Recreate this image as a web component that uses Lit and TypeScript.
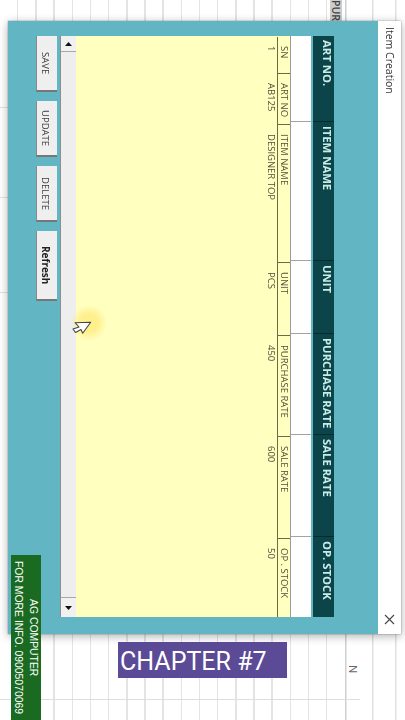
import { LitElement, html, css, svg } from "lit";
import { customElement } from "lit/decorators.js";

const FIELDS = ["ART NO.", "ITEM NAME", "UNIT", "PURCHASE RATE", "SALE RATE", "OP. STOCK"];
const LIST_HEAD = ["SN", "ART NO", "ITEM NAME", "UNIT", "PURCHASE RATE", "SALE RATE", "OP . STOCK"];
const LIST_ROW = ["1", "AB125", "DESIGNER TOP", "PCS", "450", "600", "50"];
const BUTTONS = ["SAVE", "UPDATE", "DELETE", "Refresh"];

@customElement("app-root")
export class AppRoot extends LitElement {
  static styles = css`
    :host {
      display: block;
      position: relative;
      width: 405px;
      height: 720px;
      overflow: hidden;
      font-family: "Open Sans", sans-serif;
      background-color: #fff;
      background-image:
        linear-gradient(#dedede, #dedede),
        linear-gradient(#e2e2e2, #e2e2e2),
        linear-gradient(#e2e2e2, #e2e2e2),
        linear-gradient(#e2e2e2, #e2e2e2),
        linear-gradient(#cfcfcf, #cfcfcf),
        linear-gradient(#e0e0e0, #e0e0e0),
        linear-gradient(#e0e0e0, #e0e0e0),
        repeating-linear-gradient(90deg, #e4e4e4 0 1.5px, transparent 1.5px 18.17px);
      background-repeat: no-repeat;
      background-size:
        360px 1px,
        10px 1px,
        10px 1px,
        10px 1px,
        1.5px 100%,
        1.5px 100%,
        1.5px 100%,
        312px 100%;
      background-position:
        0 699px,
        0 107px,
        0 197px,
        0 292px,
        345px 0,
        372px 0,
        395px 0,
        17px 0;
    }
    .col-head {
      position: absolute;
      left: 330px;
      top: 0;
      width: 12px;
      height: 21px;
      background: #cdcdcd;
      color: #444;
      writing-mode: vertical-rl;
      font-size: 10.5px;
      line-height: 12px;
      font-weight: 600;
      white-space: nowrap;
      box-sizing: border-box;
    }
    .col-letter {
      position: absolute;
      left: 347px;
      top: 665px;
      writing-mode: vertical-rl;
      font-size: 11px;
      line-height: 12px;
      color: #666;
    }
    .window {
      position: absolute;
      left: 8px;
      top: 21px;
      width: 393px;
      height: 613px;
      box-sizing: border-box;
      writing-mode: vertical-rl;
      display: flex;
      flex-direction: column;
      background: #fff;
      box-shadow: 0 2px 9px rgba(0, 0, 0, 0.32), 0 0 1px #667;
      filter: blur(0.35px);
    }
    .title {
      block-size: 23px;
      flex: none;
      display: flex;
      align-items: center;
      justify-content: space-between;
      padding-inline: 6px 9px;
      box-sizing: border-box;
      font-size: 10.5px;
      color: #333;
      background: #fff;
    }
    .close { width: 11px; height: 11px; display: block; }
    .client {
      flex: 1;
      background: #62b5c3;
      padding-block-start: 44px;
      padding-inline-start: 15px;
      padding-inline-end: 17px;
      display: flex;
      flex-direction: column;
      align-items: stretch;
    }
    .fields {
      display: grid;
      grid-template-columns: 86px 139px 73px 101px 102px 80px;
      block-size: 21px;
      background: #0b4449;
      flex: none;
    }
    .fields div {
      color: #c9ece9;
      font-weight: 700;
      font-size: 11.3px;
      line-height: 14px;
      padding-inline-start: 4px;
      white-space: nowrap;
      border-inline-end: 1px solid #062a2e;
    }
    .fields div:last-child { border-inline-end: none; }
    .inputs {
      display: grid;
      grid-template-columns: 86px 139px 73px 101px 102px 80px;
      block-size: 20px;
      margin-block-start: 2px;
      flex: none;
      background: #fff;
    }
    .inputs div { border-inline-end: 1.5px solid #a3a3a3; }
    .inputs div:last-child { border-inline-end: none; }
    .list {
      block-size: 231px;
      flex: none;
      display: flex;
      flex-direction: column;
      background: #ffffc0;
      border-block-start: 1px solid #9a9a9a;
      box-sizing: border-box;
    }
    .table { flex: 1; padding-inline-start: 1px; color: #4f4f3a; }
    .row {
      display: grid;
      grid-template-columns: 37px 51px 138px 73px 101px 102px 76px;
      font-size: 9.5px;
      white-space: nowrap;
    }
    .row > div { padding-inline-start: 9px; }
    .row.head {
      block-size: 13px;
      line-height: 12px;
      border-block-end: 1px solid #6b6b45;
      box-sizing: border-box;
    }
    .row.head > div { border-inline-end: 1px solid #6b6b45; }
    .row.head > div:last-child { border-inline-end: none; }
    .row.data { block-size: 12px; line-height: 12px; }
    .scrollbar {
      block-size: 16px;
      flex: none;
      background: #eeeeee;
      border-block-end: 1.5px solid #8e8e8e;
      box-sizing: border-box;
      display: flex;
      justify-content: space-between;
    }
    .sbtn {
      inline-size: 15px;
      display: flex;
      align-items: center;
      justify-content: center;
      background: #f1f1f1;
      border-inline-end: 1px solid #a8a8a8;
    }
    .sbtn.down { inline-size: 19px; border-inline-end: none; border-inline-start: 1px solid #a8a8a8; }
    .sbtn svg { width: 7px; height: 4px; display: block; }
    .actions {
      display: flex;
      gap: 9px;
      block-size: 21px;
      margin-block-start: 3px;
      flex: none;
    }
    .btn {
      inline-size: 56px;
      background: #efefef;
      border-inline-end: 2px solid #777;
      border-block-end: 1.5px solid #8a8a8a;
      box-sizing: border-box;
      display: flex;
      align-items: center;
      justify-content: center;
      font-size: 9.5px;
      color: #3c3c3c;
      padding-block-start: 3px;
    }
    .btn.strong {
      inline-size: 70px;
      font-weight: 700;
      color: #222;
      font-size: 10px;
    }
    .highlight {
      position: absolute;
      left: 71px;
      top: 305px;
      width: 36px;
      height: 36px;
      border-radius: 50%;
      background: radial-gradient(circle, rgba(255, 230, 110, 0.6) 0 35%, rgba(255, 230, 110, 0) 72%);
    }
    .cursor {
      position: absolute;
      left: 50px;
      top: 290px;
      width: 70px;
      height: 70px;
    }
    .badge {
      position: absolute;
      left: 11px;
      top: 555px;
      width: 30px;
      height: 165px;
      background: #1a6b21;
      color: #fff;
      writing-mode: vertical-rl;
      text-align: center;
      white-space: nowrap;
      font-family: "Liberation Sans", sans-serif;
      font-size: 10.4px;
      line-height: 15px;
    }
    .chapter {
      position: absolute;
      left: 118px;
      top: 642px;
      width: 169px;
      height: 36px;
      box-sizing: border-box;
      padding-left: 2px;
      background: #5b4a96;
      color: #fff;
      font-family: Roboto, sans-serif;
      font-size: 25px;
      line-height: 39px;
      white-space: nowrap;
      overflow: hidden;
    }
  `;

  private arrow(points: string) {
    return html`<svg viewBox="0 0 7 4">${svg`<polygon points=${points} fill="#111"></polygon>`}</svg>`;
  }

  render() {
    return html`
      <div class="col-head">PUR</div>
      <div class="col-letter">N</div>
      <div class="window">
        <div class="title">
          <span>Item Creation</span>
          <svg class="close" viewBox="0 0 11 11">
            <path d="M1 1 L10 10 M10 1 L1 10" stroke="#444" stroke-width="1.1" fill="none"></path>
          </svg>
        </div>
        <div class="client">
          <div class="fields">${FIELDS.map((f) => html`<div>${f}</div>`)}</div>
          <div class="inputs">${FIELDS.map(() => html`<div></div>`)}</div>
          <div class="list">
            <div class="table">
              <div class="row head">${LIST_HEAD.map((c) => html`<div>${c}</div>`)}</div>
              <div class="row data">${LIST_ROW.map((c) => html`<div>${c}</div>`)}</div>
            </div>
            <div class="scrollbar">
              <div class="sbtn">${this.arrow("3.5,0 7,4 0,4")}</div>
              <div class="sbtn down">${this.arrow("0,0 7,0 3.5,4")}</div>
            </div>
          </div>
          <div class="actions">
            ${BUTTONS.map(
              (b) => html`<div class="btn ${b === "Refresh" ? "strong" : ""}">${b}</div>`
            )}
          </div>
        </div>
      </div>
      <div class="highlight"></div>
      <svg class="cursor" viewBox="0 0 70 70">
        <path
          d="M40.7 32.3 L25 32.7 L29 37 L23 39 L25.5 42.5 L31 39.5 L32.7 43.3 Z"
          fill="#fff"
          stroke="#444"
          stroke-width="1.1"
          stroke-linejoin="round"
        ></path>
      </svg>
      <div class="badge">AG COMPUTER<br />FOR MORE INFO. 09005070069</div>
      <div class="chapter">CHAPTER #7</div>
    `;
  }
}
